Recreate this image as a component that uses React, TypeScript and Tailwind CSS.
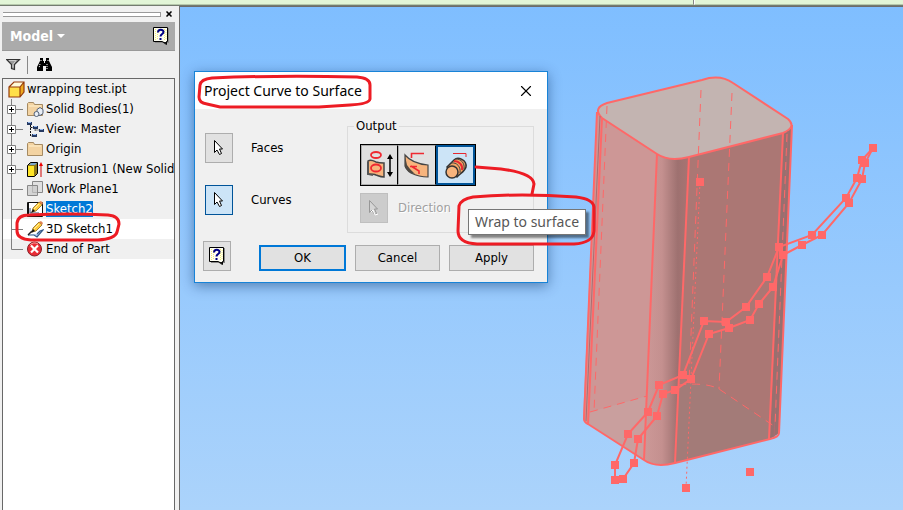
import { X } from 'lucide-react';
import type { ReactNode } from 'react';

const uiFont = "font-['DejaVu_Sans_Condensed','DejaVu_Sans',sans-serif]";

type TreeItem = {
  label: string;
  icon: ReactNode;
  expandable?: boolean;
  state?: 'selected' | 'active';
};

function HelpIcon() {
  return (
    <svg width="18" height="20" viewBox="0 0 18 20" aria-hidden="true">
      <path d="M3 2h14v15h-3v2l-3-2H3z" fill="#888" />
      <path d="M1.500 1.500h14v14h-1v3l-4-3h-9z" fill="#fffff4" stroke="#000" />
      <path
        d="M3.500 3v11M5.500 4v10M12.500 3v11M14 4v10"
        stroke="#f3ee70"
        strokeDasharray="1 1"
      />
      <path d="M10 16h4v2z" fill="#111" />
      <path
        d="M6 6.500C6 3 11.500 3 11.500 6c0 2-3 2-3 4.500M8.500 12v2"
        fill="none"
        stroke="#000084"
        strokeWidth="2"
      />
    </svg>
  );
}

function CursorIcon({ disabled = false }: { disabled?: boolean }) {
  return (
    <svg width="12" height="18" viewBox="0 0 12 18" aria-hidden="true">
      <path
        d="M1.500 1.500v12l2.500-2.500 2.500 4.500 2-1-2-4.500h3z"
        fill={disabled ? '#d5d5d5' : '#fff'}
        stroke={disabled ? '#979797' : '#000'}
      />
      {disabled && <path d="M3 13l2-2 2 5 3-1" fill="none" stroke="#fff" />}
    </svg>
  );
}

function PartIcon() {
  return (
    <svg width="17" height="17" viewBox="0 0 17 17" aria-hidden="true">
      <path d="M1 6l5-5h10l-4 5z" fill="#fffbd8" />
      <path d="M12 6l4-5v10l-4 5z" fill="#eda91f" />
      <path d="M1 6h11v10H1z" fill="#ffdf48" />
      <path
        d="M1 6l5-5h10v10l-4 5H1zM1 6h11l4-5M12 6v10"
        fill="none"
        stroke="#963b0b"
        strokeWidth="1.200"
      />
    </svg>
  );
}

function FolderIcon({ bodies = false }: { bodies?: boolean }) {
  return (
    <svg width="17" height="17" viewBox="0 0 17 17" aria-hidden="true">
      <path
        d="M.5 14.500v-12l1-1h5l1 2h8v11z"
        fill="#f3d3a2"
        stroke="#a58a62"
      />
      <path d="M2 5h12" stroke="#fff0cc" />
      {bodies && (
        <g fill="#e9eef5" stroke="#526077">
          <path d="M10 8.500l3-2 3 2v4l-3 2-3-1z" />
          <circle cx="9.500" cy="13" r="2.500" />
        </g>
      )}
    </svg>
  );
}

function ViewIcon() {
  return (
    <svg width="17" height="17" viewBox="0 0 17 17" aria-hidden="true">
      <path
        d="M3.500 4v11h4M3.500 6.500H7M7.500 9h4"
        fill="none"
        stroke="#111"
        strokeDasharray="2 1"
      />
      <path d="M0 1h5v3H0zM6 5h5v3H6zM5 13h5v3H5zM12 8h5v3h-5z" fill="#263a62" />
      <path d="M1 1h3v1H1zM7 5h3v1H7zM6 13h3v1H6zM13 8h3v1h-3z" fill="#91b8f0" />
    </svg>
  );
}

function ExtrusionIcon() {
  return (
    <svg width="17" height="17" viewBox="0 0 17 17" aria-hidden="true">
      <path d="M.5 4.500l3-3h7v11l-3 3h-7z" fill="#8c7818" stroke="#000" />
      <path d="M1 5h6v10H1z" fill="#ffe527" />
      <path d="M2 4l2-2h6L8 4z" fill="#7ba6cb" />
      <path d="M14 16V4" stroke="#d00000" />
      <path d="M12 5l2-4 2 4z" fill="#e00" />
    </svg>
  );
}

function PlaneIcon() {
  return (
    <svg width="17" height="17" viewBox="0 0 17 17" aria-hidden="true">
      <path d="M5.500.5h10v11h-10z" fill="#e0e0e0" stroke="#888" />
      <path
        d="M.5 4.500h10v10H.5z"
        fill="#c8c8c8"
        fillOpacity=".7"
        stroke="#888"
      />
    </svg>
  );
}

function Pencil() {
  return (
    <g>
      <path d="M5 11l1-4 6-6 3 3-6 6z" fill="#ffcb3c" stroke="#8a6820" strokeWidth=".8" />
      <path d="M7 8l5-5" stroke="#fff0a0" />
      <path d="M12 1l3 3 1-2-2-2z" fill="#df8151" />
      <path d="M4 12l2-4 2 2z" fill="#111" />
    </g>
  );
}

function SketchIcon() {
  return (
    <svg width="17" height="17" viewBox="0 0 17 17" aria-hidden="true">
      <path d="M.5 1.500h15v14H.5z" fill="#fff" stroke="#111" />
      <path d="M1 2v13h14" fill="none" stroke="#111" strokeWidth="2" />
      <path d="M3 7v5h9" fill="none" stroke="#344b71" />
      <Pencil />
    </svg>
  );
}

function Sketch3DIcon() {
  return (
    <svg width="17" height="17" viewBox="0 0 17 17" aria-hidden="true">
      <path
        d="M1 14h6l3 2 6-7-3 1-3 3"
        fill="#a9cbee"
        stroke="#355a88"
        strokeWidth="1.200"
      />
      <path d="M1 14l4-4" stroke="#222" strokeWidth="1.500" />
      <Pencil />
    </svg>
  );
}

function EndIcon() {
  return (
    <svg width="17" height="17" viewBox="0 0 17 17" aria-hidden="true">
      <circle cx="7.500" cy="8" r="7" fill="#e92c36" stroke="#852026" />
      <path d="M3 4a6 6 0 0 1 8-1" fill="none" stroke="#ff9ea0" />
      <path d="M4 4.500l7 7m0-7l-7 7" stroke="#fff" strokeWidth="2.200" />
    </svg>
  );
}

function FilterIcon() {
  return (
    <svg width="15" height="13" viewBox="0 0 15 13" aria-hidden="true">
      <path
        d="M.5 1.500h13l-5 5v5l-3-1v-4z"
        fill="#999"
        stroke="#333"
        strokeWidth="1.200"
      />
      <path d="M3 2.500h7l-3 4v3" fill="none" stroke="#ccc" />
    </svg>
  );
}

function BinocularsIcon() {
  return (
    <svg width="16" height="14" viewBox="0 0 16 14" aria-hidden="true">
      <path
        d="M3 0h3v3h1v2h1V3h1V0h3v3l3 6v4H9V8H6v5H0V9l3-6z"
        fill="#000"
      />
      <path
        d="M4 2v2M3 6l-1 4M11 2v2M10 6v5"
        stroke="#fff"
        strokeDasharray="1 1"
      />
    </svg>
  );
}

const treeItems: TreeItem[] = [
  { label: 'Solid Bodies(1)', icon: <FolderIcon bodies />, expandable: true },
  { label: 'View: Master', icon: <ViewIcon />, expandable: true },
  { label: 'Origin', icon: <FolderIcon />, expandable: true },
  {
    label: 'Extrusion1 (New Solid',
    icon: <ExtrusionIcon />,
    expandable: true,
  },
  { label: 'Work Plane1', icon: <PlaneIcon /> },
  { label: 'Sketch2', icon: <SketchIcon />, state: 'selected' },
  { label: '3D Sketch1', icon: <Sketch3DIcon />, state: 'active' },
  { label: 'End of Part', icon: <EndIcon /> },
];

function TreeBranch({
  expandable,
  last,
}: {
  expandable?: boolean;
  last: boolean;
}) {
  return (
    <svg
      className="shrink-0"
      width="24"
      height="20"
      viewBox="0 0 24 20"
      aria-hidden="true"
    >
      <path
        d={last ? 'M8.500 0v10.500H20' : 'M8.500 0v20M8 10.500h12'}
        fill="none"
        stroke="#808080"
      />
      {expandable && (
        <g>
          <path d="M4.500 6.500h8v8h-8z" fill="#fff" stroke="#808080" />
          <path d="M6 10.500h5M8.500 8v5" stroke="#000" />
        </g>
      )}
    </svg>
  );
}

function ModelPanel() {
  return (
    <aside className="flex w-[179px] shrink-0 flex-col bg-[#f0f0f0] pt-[2px]">
      <div className="flex h-[14px] items-center gap-1 pb-[2px] pl-[3px]">
        <div className="h-[5px] w-[158px] border-y border-r border-[#999] bg-white" />
        <button type="button" aria-label="Close panel">
          <X size={8} strokeWidth={5} />
        </button>
      </div>
      <header className="mr-1 ml-[2px] flex h-[29px] items-center justify-between border-b border-[#999] bg-[#ababab] pr-[5px] pl-2">
        <button
          type="button"
          className="flex items-center gap-1 text-[14px] font-bold text-white"
        >
          Model
          <svg width="8" height="4" viewBox="0 0 8 4" aria-hidden="true">
            <path d="M0 0h8L4 4z" fill="#fff" />
          </svg>
        </button>
        <button type="button" aria-label="Help">
          <HelpIcon />
        </button>
      </header>
      <div className="flex h-[27px] shrink-0 items-center pl-[6px]">
        <button type="button" aria-label="Filter">
          <FilterIcon />
        </button>
        <span className="ml-[6px] h-[18px] w-px bg-[#888]" />
        <button type="button" aria-label="Find" className="ml-[9px]">
          <BinocularsIcon />
        </button>
      </div>
      <div className="mr-1 ml-[2px] flex-1 overflow-hidden border-x border-t border-[#686868] bg-white text-[13px]">
        <div className="flex h-5 items-center gap-[2px] bg-[#f0f0f0] pl-[5px]">
          <PartIcon />
          <span>wrapping test.ipt</span>
        </div>
        <ul>
          {treeItems.map((item, i) => (
            <li
              key={item.label}
              className={`flex h-5 items-center whitespace-nowrap ${
                item.state === 'active' ? 'bg-white' : 'bg-[#f0f0f0]'
              }`}
            >
              <TreeBranch
                expandable={item.expandable}
                last={i === treeItems.length - 1}
              />
              <span className="shrink-0">{item.icon}</span>
              <span
                className={`ml-[2px] leading-4 ${
                  item.state === 'selected' ? 'bg-[#0078d7] text-white' : ''
                }`}
              >
                {item.label}
              </span>
            </li>
          ))}
        </ul>
      </div>
    </aside>
  );
}

// Control points of the two rails of the sketched curve
const railA = [
  [873, 148], [862, 160], [857, 178], [846, 198], [812, 235], [779, 247],
  [767, 277], [746, 307], [726, 322], [704, 321], [683, 375], [659, 385],
  [648, 412], [628, 434], [615, 465], [615, 480],
];
const railB = [
  [873, 148], [865, 163], [862, 179], [849, 203], [822, 235], [802, 245],
  [783, 255], [773, 287], [759, 304], [750, 320], [729, 328], [709, 334],
  [691, 379], [675, 390], [663, 394], [657, 416], [638, 439], [634, 463],
  [623, 479], [615, 480],
];
const loosePoints = [[700, 182], [686, 488], [750, 472]];

function ModelDrawing() {
  return (
    <svg
      className="block shrink-0"
      width="723"
      height="504"
      viewBox="180 7 723 504"
      role="img"
      aria-label="Extruded part with sketched curve"
    >
      <defs>
        <linearGradient id="corner" x1="0" x2="1">
          <stop offset="0" stopColor="#cd9998" />
          <stop offset=".4" stopColor="#c4908f" />
          <stop offset=".75" stopColor="#9e7170" />
          <stop offset="1" stopColor="#a87472" />
        </linearGradient>
      </defs>
      <path d="M597 112L583 419L588 424L644 460L657 154L602 118Z" fill="#cd9796" />
      <path d="M657 154L644 460Q655 467 675 463L689 157Q669 161 657 154Z" fill="url(#corner)" />
      <path d="M689 157L675 463L770 439L779 433L792 125L783 133Z" fill="#ab7774" />
      <path d="M590 412L647 396L644 460L588 424Z" fill="#c99f9e" />
      <path d="M678 384Q706 382 719 389L774 426L770 439L675 463Z" fill="#a37b78" />
      <path d="M783 133L792 125L779 433L770 439Z" fill="#97706f" />
      <path
        d="M607 103L702 80Q720 74 733 83L788 119Q797 127 783 133L689 157Q669 162 657 154L602 118Q592 108 607 103Z"
        fill="#c3b4b1"
        stroke="#ff6868"
        strokeWidth="2"
      />
      <path d="M600 116L586 421M788 131L774 438" stroke="#ad6b70" />
      <g fill="none" stroke="#ff6868" strokeWidth="2">
        <path d="M597 112L584 419Q584 422 588 424L644 460Q655 468 675 463L770 439Q779 437 779 433L792 125" />
        <path d="M602 118L588 424M657 154L644 460M689 157L675 463M783 133L769 439" />
      </g>
      <g fill="none" stroke="#ff6868" strokeDasharray="8 6">
        <path d="M607 106L594 412M701 90L689 384M732 93L719 389M787 134L775 427" />
        <path d="M590 412L647 396M678 385Q706 382 719 389L774 426" />
      </g>
      <path d="M700 182L686 488" stroke="#ff6868" strokeDasharray="2 3" />
      <g fill="none" stroke="#ff6868" strokeWidth="2">
        <polyline points={railA.map((p) => p.join(',')).join(' ')} />
        <polyline points={railB.map((p) => p.join(',')).join(' ')} />
      </g>
      {[...railA, ...railB, ...loosePoints].map(([x, y], i) => (
        <rect key={i} x={x - 4} y={y - 4} width="8" height="8" fill="#ff6868" />
      ))}
    </svg>
  );
}

function ProjectIcon() {
  return (
    <svg width="30" height="30" viewBox="0 0 30 30" aria-hidden="true">
      <path
        d="M3 11c3-2 6 0 8 1 3 1 5 1 8 1v14c-4 0-5-1-8-2-2-1-5-1-8-1z"
        fill="#f7b47d"
        stroke="#444"
        strokeWidth="1.500"
      />
      <path d="M3 12v12l5 1" fill="none" stroke="#555" strokeWidth="2" />
      <g fill="none" stroke="#ef2931" strokeWidth="1.800">
        <ellipse cx="11" cy="5" rx="5" ry="3" />
        <ellipse cx="11" cy="18" rx="5" ry="3.500" />
      </g>
      <path d="M25 8v16" stroke="#000" strokeWidth="1.500" />
      <path d="M22 9l3-5 3 5zM22 22l3 5 3-5z" fill="#000" />
    </svg>
  );
}

function ClosestPointIcon() {
  return (
    <svg width="30" height="30" viewBox="0 0 30 30" aria-hidden="true">
      <path
        d="M3 5c5 6 12 9 23 10v12c-8 0-13-2-17-4-3-2-5-4-6-7z"
        fill="#f7b47d"
        stroke="#444"
        strokeWidth="1.200"
      />
      <path d="M3 6v10c1 3 3 5 6 7l4 1-5-5-3-4z" fill="#4f4942" />
      <path
        d="M9.500 8V3.500H22M8 16.500h7M9 16l8 5v3"
        fill="none"
        stroke="#ef2931"
        strokeWidth="1.600"
      />
    </svg>
  );
}

function WrapIcon() {
  return (
    <svg width="30" height="30" viewBox="0 0 30 30" aria-hidden="true">
      <path
        d="M7 17L14 10c4-4 13 0 12 7-1 4-5 6-9 10z"
        fill="#f2a665"
        stroke="#333"
        strokeWidth="1.500"
      />
      <path
        d="M11 13c6-1 10 4 9 10M16 9c5 0 9 4 8 10"
        fill="none"
        stroke="#444"
      />
      <path
        d="M14 11c5 0 9 4 8 9"
        fill="none"
        stroke="#e72830"
        strokeWidth="2"
      />
      <circle
        cx="12"
        cy="22"
        r="6"
        fill="#f7b47d"
        stroke="#333"
        strokeWidth="1.500"
      />
      <path d="M13 3.500h13V7" fill="none" stroke="#e72830" />
    </svg>
  );
}

const outputModes = [
  { label: 'Project along vector', icon: <ProjectIcon /> },
  { label: 'Project to closest point', icon: <ClosestPointIcon /> },
  { label: 'Wrap to surface', icon: <WrapIcon />, active: true },
];

function PickRow({ label, active }: { label: string; active?: boolean }) {
  const id = label.toLowerCase();
  return (
    <div className="flex items-center gap-[18px]">
      <button
        type="button"
        aria-labelledby={id}
        className={`flex h-[30px] w-7 items-center justify-center border ${
          active
            ? 'border-[#005499] bg-[#cce4f7]'
            : 'border-[#adadad] bg-[#e1e1e1]'
        }`}
      >
        <CursorIcon />
      </button>
      <span id={id}>{label}</span>
    </div>
  );
}

function ProjectDialog() {
  return (
    <section
      role="dialog"
      aria-labelledby="dialog-title"
      className="absolute top-[71px] left-[194px] w-[354px] border border-[#1883d7] bg-[#f0f0f0] text-[13px] shadow-[0_3px_12px_rgba(0,40,90,0.45)]"
    >
      <header className="flex h-[37px] items-center justify-between bg-white pr-3 pl-[9px]">
        <h1
          id="dialog-title"
          className="font-['Noto_Sans','Open_Sans',sans-serif] text-[14px]"
        >
          Project Curve to Surface
        </h1>
        <button type="button" aria-label="Close">
          <X size={18} strokeWidth={1.5} />
        </button>
      </header>
      <div className="flex justify-between pt-[9px] pr-[13px] pl-[10px]">
        <div className="flex flex-col gap-[22px] pt-[15px]">
          <PickRow label="Faces" />
          <PickRow label="Curves" active />
        </div>
        <fieldset className="w-[187px] border border-[#dcdcdc] px-3 pb-[9px]">
          <legend className="-ml-[6px] px-[2px] leading-4">Output</legend>
          <div className="mt-[10px] flex w-[116px] border border-black">
            {outputModes.map((mode) => (
              <button
                key={mode.label}
                type="button"
                aria-label={mode.label}
                className={`flex h-10 flex-1 items-center justify-center border ${
                  mode.active
                    ? 'border-2 border-[#005499] bg-[#cce4f7]'
                    : 'border-y-[#adadad] border-r-black border-l-[#adadad] bg-[#e1e1e1]'
                }`}
              >
                {mode.icon}
              </button>
            ))}
          </div>
          <div className="mt-[7px] flex items-center gap-[10px] text-[#a0a0a0]">
            <button
              type="button"
              disabled
              aria-labelledby="direction"
              className="flex h-[30px] w-7 items-center justify-center border border-[#bfbfbf] bg-[#cccccc]"
            >
              <CursorIcon disabled />
            </button>
            <span id="direction" className="[text-shadow:1px_1px_#fff]">
              Direction
            </span>
          </div>
        </fieldset>
      </div>
      <footer className="flex items-end gap-[9px] pt-2 pr-[13px] pb-[11px] pl-2">
        <button
          type="button"
          aria-label="Help"
          className="mr-[19px] flex h-[30px] w-7 items-center justify-center border border-[#adadad] bg-[#e1e1e1]"
        >
          <HelpIcon />
        </button>
        <button
          type="button"
          className="h-[26px] flex-1 border-2 border-[#0078d7] bg-[#e1e1e1]"
        >
          OK
        </button>
        <button
          type="button"
          className="h-[26px] flex-1 border border-[#adadad] bg-[#e1e1e1]"
        >
          Cancel
        </button>
        <button
          type="button"
          className="h-[26px] flex-1 border border-[#adadad] bg-[#e1e1e1]"
        >
          Apply
        </button>
      </footer>
    </section>
  );
}

function Markup() {
  return (
    <svg
      className="pointer-events-none absolute top-0 left-0"
      width="600"
      height="260"
      viewBox="0 0 600 260"
      fill="none"
      stroke="#ed1c24"
      strokeWidth="3"
      strokeLinecap="round"
      aria-hidden="true"
    >
      <path d="M212 78Q280 75 357 77Q370 78 370 85V99Q369 104 350 105L319 107H220L207 104Q199 103 199 97L200 85Q201 79 212 78Z" />
      <path d="M29 215Q70 213 108 215Q119 216 119 224L117 232Q115 239 98 240H31Q17 239 17 231V223Q18 215 29 215Z" />
      <path d="M476 167L501 169Q533 173 534 184L532 194" />
      <path d="M473 197Q520 193 576 197Q593 199 594 207V231Q593 243 574 244H477Q458 243 458 231L459 206Q461 199 473 197Z" />
    </svg>
  );
}

export default function App() {
  return (
    <main
      className={`relative flex h-screen flex-col overflow-hidden bg-[#f0f0f0] text-black ${uiFont}`}
    >
      <div className="flex h-[6px] shrink-0 border-b border-[#737b70] bg-[#e2f5d7]">
        <div className="w-[694px] border-r border-[#858585] border-b border-b-[#b6c9ac]" />
        <div className="flex-1 border-b border-l border-b-[#b6c9ac] border-l-white" />
      </div>
      <div className="flex min-h-0 flex-1">
        <ModelPanel />
        <div className="min-w-0 flex-1 overflow-hidden border-t border-l border-[#6c6c6c] bg-linear-to-b from-[#7fbeff] to-[#abd3fb]">
          <ModelDrawing />
        </div>
      </div>
      <ProjectDialog />
      <div
        role="tooltip"
        className="absolute top-[209px] left-[468px] border border-[#767676] bg-white px-[6px] py-[2px] font-['Noto_Sans','Open_Sans',sans-serif] text-[14px] leading-5 text-[#575757] shadow-[3px_3px_2px_rgba(0,0,0,0.45)]"
      >
        Wrap to surface
      </div>
      <Markup />
    </main>
  );
}
